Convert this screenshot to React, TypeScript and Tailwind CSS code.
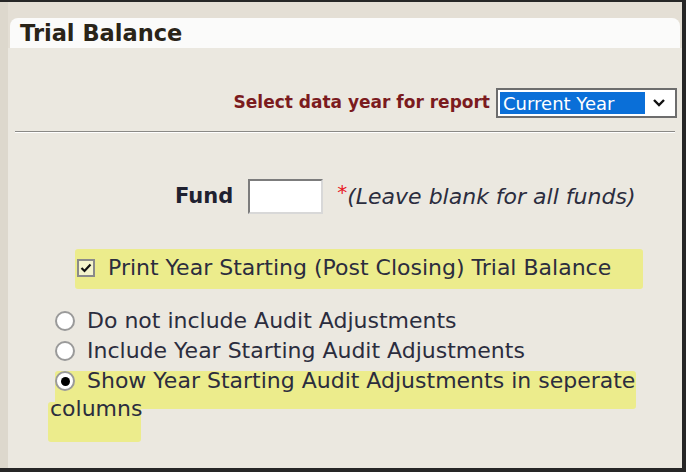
import React from 'react';

const font = { fontFamily: '"DejaVu Sans", Verdana, sans-serif' };

const Radio = ({ checked }: { checked?: boolean }) => (
  <span className="inline-flex w-[20px] h-[20px] shrink-0 items-center justify-center rounded-full border-2 border-[#9a9a9a] bg-white">
    {checked && <span className="w-[9px] h-[9px] rounded-full bg-black" />}
  </span>
);

export default function App() {
  return (
    <div
      className="relative w-[686px] h-[472px] overflow-hidden bg-[#e4dfd5] border-t-2 border-b-4 border-[#262626] text-[#2b2d3e]"
      style={font}
    >
      <div className="flex h-full">
        <div className="w-[8px] shrink-0 bg-[#ddd8cd]" />
        <div className="flex flex-col w-[674px] pt-[16px]">
          {/* Title bar */}
          <div className="mx-[2px] h-[30px] rounded-t-[8px] bg-[#fbfbfa] flex items-center pl-[10px]">
            <span className="text-[22.5px] font-bold text-[#2a2418] leading-none">Trial Balance</span>
          </div>

          {/* Panel */}
          <div className="flex-1 bg-[#ebe8e0] flex flex-col">
            <div className="flex items-center justify-end pt-[40px] pr-[5px]">
              <span className="text-[17px] font-bold text-[#7b1b1e] mr-[6px]">Select data year for report</span>
              <div className="flex items-center w-[181px] h-[30px] border-2 border-[#6d6d6d] bg-white p-[2px]">
                <span className="flex-1 h-full bg-[#0a6fd8] text-white text-[18px] leading-[24px] pl-[3px]">Current Year</span>
                <span className="w-[28px] h-full flex items-center justify-center">
                  <svg width="14" height="10" viewBox="0 0 14 10">
                    <path d="M2 2 L7 7 L12 2" stroke="#111" strokeWidth="2.4" fill="none" />
                  </svg>
                </span>
              </div>
            </div>

            <div className="mx-[7px] mt-[13px] h-[2px] bg-[#8a8986] border-b border-white" />

            <div className="pt-[46px]">
              <div className="flex items-center pl-[167px] h-[35px]">
                <span className="text-[21px] font-bold text-[#1f2130] mr-[15px]">Fund</span>
                <span className="w-[75px] h-[35px] shrink-0 border-2 border-t-[#7c7c7c] border-l-[#7c7c7c] border-r-[#d8d8d8] border-b-[#d8d8d8] bg-white" />
                <span className="ml-[14px] text-[#e8181e] text-[20px] leading-none self-start mt-[3px]">*</span>
                <span className="text-[22px] italic whitespace-nowrap">(Leave blank for all funds)</span>
              </div>
            </div>

            <div className="pt-[41px]">
              <div className="relative flex items-center ml-[69px] h-[26px]">
                <span className="absolute -left-[2px] -top-[6px] w-[568px] h-[40px] bg-[#ecec8c] rounded-[3px]" />
                <span className="relative w-[18px] h-[18px] border-2 border-[#8a8a8a] bg-[#f4f4cc] flex items-center justify-center">
                  <svg width="12" height="10" viewBox="0 0 12 10">
                    <path d="M1.5 5 L4.5 8 L10.5 1.5" stroke="#111" strokeWidth="2.2" fill="none" />
                  </svg>
                </span>
                <span className="relative ml-[13px] text-[22px] leading-[26px] whitespace-nowrap">
                  Print Year Starting (Post Closing) Trial Balance
                </span>
              </div>
            </div>

            <div className="flex flex-col pl-[47px] pt-[27px] gap-[4px] text-[22px] leading-[26px] whitespace-nowrap">
              <label className="flex items-center gap-[12px] h-[26px]">
                <Radio />
                <span>Do not include Audit Adjustments</span>
              </label>
              <label className="flex items-center gap-[12px] h-[26px]">
                <Radio />
                <span>Include Year Starting Audit Adjustments</span>
              </label>
              <div className="relative">
                <span className="absolute left-0 top-[3px] w-[581px] h-[38px] bg-[#ecec8c] rounded-[3px]" />
                <span className="absolute -left-[7px] top-[34px] w-[93px] h-[40px] bg-[#ecec8c] rounded-[3px]" />
                <div className="relative flex items-center gap-[12px] h-[26px]">
                  <Radio checked />
                  <span>Show Year Starting Audit Adjustments in seperate</span>
                </div>
                <div className="relative leading-[30px] -ml-[5px]">columns</div>
              </div>
            </div>
          </div>
        </div>
        <div className="w-[4px] shrink-0 bg-[#262626]" />
      </div>
    </div>
  );
}
